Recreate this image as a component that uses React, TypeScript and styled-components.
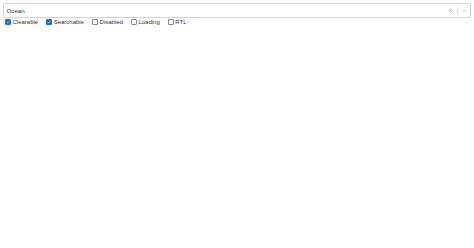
import { useState } from "react";
import styled, { createGlobalStyle } from "styled-components";

const GlobalStyle = createGlobalStyle`
  body {
    margin: 0;
    padding: 3px;
    background: #fff;
    font-family: "Liberation Sans", Arial, sans-serif;
  }
`;

// the select box
const Control = styled.div`
  display: flex;
  align-items: center;
  height: 15px;
  box-sizing: border-box;
  border: 1px solid #d4d4d4;
  border-radius: 2px;
  background: #fff;
`;

const ValueBox = styled.div`
  flex: 1;
  padding: 0 2.5px;
  font-size: 6.2px;
  color: #333;
`;

const Indicators = styled.div`
  display: flex;
  align-items: center;
  gap: 4px;
  padding-right: 3px;
  color: #b3b3b3;
`;

const Separator = styled.span`
  width: 1px;
  height: 8px;
  background: #e0e0e0;
`;

// row of toggles under the select
const OptionRow = styled.div`
  display: flex;
  align-items: center;
  margin-top: 1px;
  padding-left: 2px;
`;

const CheckLabel = styled.label`
  display: flex;
  align-items: center;
  margin-right: 8px;
  font-size: 6px;
  color: #333;
  cursor: pointer;
`;

const HiddenInput = styled.input`
  display: none;
`;

const Box = styled.span<{ $on: boolean }>`
  display: inline-flex;
  align-items: center;
  justify-content: center;
  width: 4px;
  height: 4px;
  margin-right: 1.5px;
  border: 0.5px solid ${(p) => (p.$on ? "#1a6fd6" : "#888")};
  border-radius: 1px;
  background: ${(p) => (p.$on ? "#1a6fd6" : "#fff")};
`;

const options = ["Clearable", "Searchable", "Disabled", "Loading", "RTL"];

function App() {
  const [checked, setChecked] = useState<Record<string, boolean>>({
    Clearable: true,
    Searchable: true,
  });

  return (
    <>
      <GlobalStyle />
      <Control>
        <ValueBox>Ocean</ValueBox>
        <Indicators>
          <svg width="5" height="5" viewBox="0 0 20 20">
            <path d="M4 4 L16 16 M16 4 L4 16" stroke="currentColor" strokeWidth="3" />
          </svg>
          <Separator />
          <svg width="5" height="5" viewBox="0 0 20 20">
            <path d="M4 7 L10 13 L16 7" stroke="currentColor" strokeWidth="3" fill="none" />
          </svg>
        </Indicators>
      </Control>
      <OptionRow>
        {options.map((o) => (
          <CheckLabel key={o}>
            <HiddenInput
              type="checkbox"
              checked={!!checked[o]}
              onChange={() => setChecked({ ...checked, [o]: !checked[o] })}
            />
            <Box $on={!!checked[o]}>
              {checked[o] && (
                <svg width="4" height="4" viewBox="0 0 10 10">
                  <path d="M2 5 L4 7 L8 3" stroke="#fff" strokeWidth="1.6" fill="none" />
                </svg>
              )}
            </Box>
            {o}
          </CheckLabel>
        ))}
      </OptionRow>
    </>
  );
}

export default App;
